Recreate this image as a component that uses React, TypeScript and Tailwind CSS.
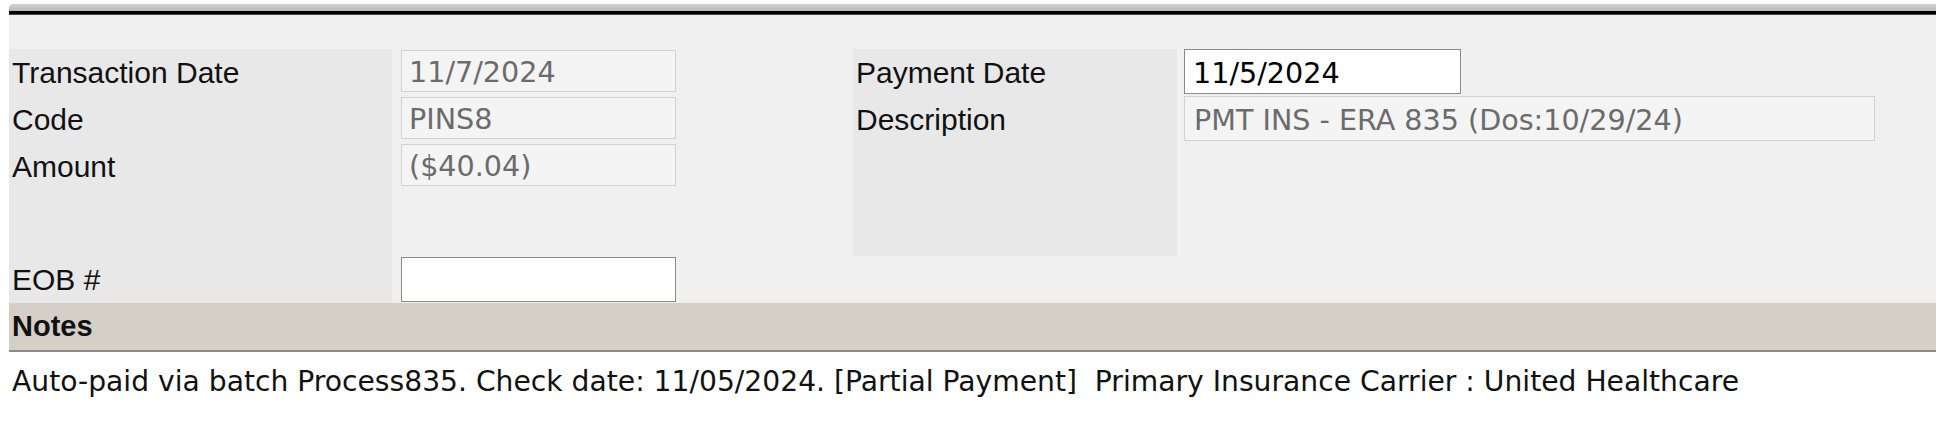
import React from "react";

const label = "flex h-[47px] items-center pl-[3px] text-[30px] leading-none text-[#111]";
const roField =
  "block h-[42px] w-[275px] border border-[#d2d2d2] bg-[#f4f4f4] px-[7px] pt-[2px] font-['DejaVu_Sans',Verdana,sans-serif] text-[28.6px] text-[#6b6b6b] outline-none";
const editField =
  "block h-[45px] border border-[#8a8a8a] bg-white px-[8px] pt-[2px] font-['DejaVu_Sans',Verdana,sans-serif] text-[28.6px] text-black outline-none";

export default function App() {
  return (
    <div className="h-[441px] w-[1936px] overflow-hidden bg-white pt-[4px] font-['Liberation_Sans',Arial,sans-serif]">
      <div className="ml-[9px]">
        <div className="h-[7px] rounded-tl-[4px] bg-gradient-to-b from-[#d2d2d2] to-[#b6b6b6]" />
        <div className="h-[4px] border-b border-[#444] bg-black" />

        <div className="flex h-[288px] items-start bg-[#f0f0f0] pt-[34px]">
          {/* left group */}
          <div className="flex">
            <div className="flex w-[383px] flex-col bg-[#e8e8e8]">
              <div className={label}>Transaction Date</div>
              <div className={label}>Code</div>
              <div className={label}>Amount</div>
              <div className="h-[66px]" />
              <div className={label}>EOB #</div>
            </div>
            <div className="ml-[9px] flex flex-col pt-[1px]">
              <input readOnly value="11/7/2024" className={roField} />
              <input readOnly value="PINS8" className={`${roField} mt-[5px]`} />
              <input readOnly value="($40.04)" className={`${roField} mt-[5px]`} />
              <input readOnly value="" className={`${editField} mt-[71px] w-[275px]`} />
            </div>
          </div>

          {/* right group */}
          <div className="ml-[177px] flex items-start">
            <div className="flex h-[207px] w-[324px] flex-col bg-[#e8e8e8]">
              <div className={label}>Payment Date</div>
              <div className={label}>Description</div>
            </div>
            <div className="ml-[7px] flex flex-col">
              <input readOnly value="11/5/2024" className={`${editField} w-[277px]`} />
              <input
                readOnly
                value="PMT INS - ERA 835 (Dos:10/29/24)"
                className={`${roField} mt-[2px] h-[45px] w-[691px] px-[9px]`}
              />
            </div>
          </div>
        </div>

        <div className="flex h-[49px] items-center border-b-2 border-[#8a8a8a] bg-[#d4d0c8] pl-[3px] text-[29px] font-bold leading-none text-[#111]">
          Notes
        </div>
        <p className="whitespace-pre pl-[3px] pt-[13px] font-['DejaVu_Sans',Verdana,sans-serif] text-[28.2px] leading-[34px] text-[#111]">
          {"Auto-paid via batch Process835. Check date: 11/05/2024. [Partial Payment]  Primary Insurance Carrier : United Healthcare"}
        </p>
      </div>
    </div>
  );
}
